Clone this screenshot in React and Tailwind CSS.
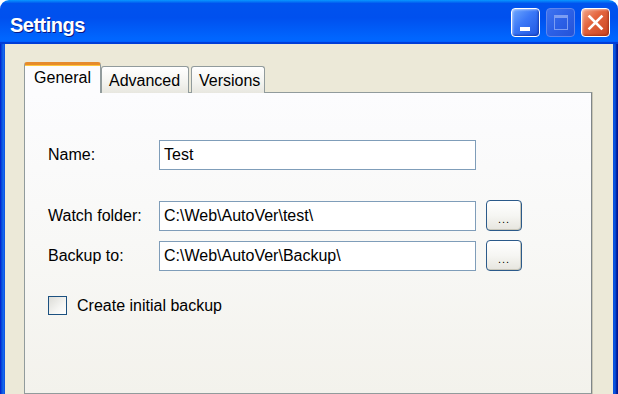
import React from "react";

function TitleButton({ kind }) {
  if (kind === "min") {
    return (
      <div className="w-[29px] h-[29px] rounded-[4px] border border-white bg-[linear-gradient(135deg,#6FA8FF_0%,#3B78F7_45%,#1F55E0_100%)] shadow-[inset_-1px_-1px_2px_rgba(0,30,140,0.6),inset_1px_1px_2px_rgba(255,255,255,0.5)] relative">
        <div className="absolute left-[8px] top-[18px] w-[10px] h-[4px] bg-white" />
      </div>
    );
  }
  if (kind === "max") {
    return (
      <div className="w-[29px] h-[29px] rounded-[4px] border border-[#5F86EC] bg-[linear-gradient(135deg,#3F74F0_0%,#2C60E6_50%,#2453D8_100%)] relative">
        <div className="absolute left-[7px] top-[6px] w-[14px] h-[15px] border border-[#7C9DF2] border-t-[3px]" />
      </div>
    );
  }
  return (
    <div className="w-[29px] h-[29px] rounded-[4px] border border-white bg-[linear-gradient(135deg,#F3A78C_0%,#E4653E_40%,#C94420_100%)] shadow-[inset_-1px_-1px_2px_rgba(120,20,0,0.5),inset_1px_1px_2px_rgba(255,255,255,0.5)] flex items-center justify-center">
      <svg width="17" height="17" viewBox="0 0 17 17">
        <path d="M2.5 2.5 L14.5 14.5 M14.5 2.5 L2.5 14.5" stroke="white" strokeWidth="2.6" strokeLinecap="square" />
      </svg>
    </div>
  );
}

function Row({ label, value, browse }) {
  return (
    <div className="flex items-center h-[31px]">
      <div className="w-[111px] shrink-0">{label}</div>
      <div className="w-[317px] h-[30px] border border-[#7F9DB9] bg-white flex items-center pl-[4px]">
        {value}
      </div>
      {browse && (
        <div className="ml-[10px] w-[36px] h-[31px] rounded-[4px] border border-[#2B5A8A] bg-[linear-gradient(to_bottom,#FFFFFF_0%,#F6F6F3_50%,#E6E5DE_100%)] shadow-[inset_-1px_-1px_0_#C9C7BA] flex items-center justify-center">
          <span className="text-[11px] leading-none mt-[7px] tracking-[1px]">...</span>
        </div>
      )}
    </div>
  );
}

export default function App() {
  return (
    <div
      className="w-[618px] h-[394px] overflow-hidden bg-white flex flex-col text-black text-[16px]"
      style={{ fontFamily: '"Liberation Sans", Arial, sans-serif' }}
    >
      {/* Title bar */}
      <div className="h-[44px] shrink-0 rounded-t-[9px] bg-[linear-gradient(180deg,#0997FF_0%,#0053EE_8%,#0050EE_40%,#0066FF_88%,#0066FF_93%,#005BFF_95%,#003DD7_96%,#003DD7_100%)] flex items-center pl-[10px] pr-[8px]">
        <div className="text-white font-bold text-[20px] tracking-[-0.5px] leading-none mt-[5px] [text-shadow:1px_1px_0_#0A1883]">
          Settings
        </div>
        <div className="ml-auto flex gap-[6px] mt-[1px]">
          <TitleButton kind="min" />
          <TitleButton kind="max" />
          <TitleButton kind="close" />
        </div>
      </div>

      {/* Body */}
      <div className="flex-1 flex min-h-0">
        <div className="w-[5px] shrink-0 bg-[linear-gradient(to_right,#0019CF,#0855DD_40%,#1666EE_70%,#0A4FE0)]" />
        <div className="flex-1 bg-[#ECE9D8] pl-[19px] pr-[21px] pt-[19px] flex flex-col min-h-0">
          {/* Tabs */}
          <div className="flex items-end h-[30px] relative z-10 -mb-[1px]">
            <div className="w-[77px] h-[31px] bg-[#FCFCFE] border-x border-[#919B9C] rounded-t-[3px] border-t-[3px] border-t-[#E68B2C] shadow-[inset_0_1px_0_#FFC73C] flex items-center justify-center pb-[2px]">
              General
            </div>
            <div className="w-[88px] h-[27px] bg-[linear-gradient(to_bottom,#FFFFFF,#F3F3EF_60%,#E8E7E0)] border border-b-0 border-[#919B9C] rounded-t-[3px] flex items-center pl-[7px] pt-[2px]">
              Advanced
            </div>
            <div className="ml-[2px] w-[74px] h-[27px] bg-[linear-gradient(to_bottom,#FFFFFF,#F3F3EF_60%,#E8E7E0)] border border-b-0 border-[#919B9C] rounded-t-[3px] flex items-center pl-[7px] pt-[2px]">
              Versions
            </div>
          </div>

          {/* Panel */}
          <div className="flex-1 border border-[#919B9C] border-r-[#7F8689] shadow-[1px_0_0_#C9C6B4] bg-[linear-gradient(to_bottom,#FCFCFE_0%,#F8F8F6_50%,#F3F2EC_100%)] pl-[23px] pt-[46px]">
            <Row label="Name:" value="Test" />
            <div className="mt-[30px]">
              <Row label="Watch folder:" value="C:\Web\AutoVer\test\" browse />
            </div>
            <div className="mt-[9px]">
              <Row label="Backup to:" value="C:\Web\AutoVer\Backup\" browse />
            </div>
            <div className="mt-[25px] flex items-center h-[19px]">
              <div className="w-[19px] h-[19px] border border-[#1C5180] bg-[linear-gradient(135deg,#DCDCD7,#F5F5F2_60%,#FFFFFF)]" />
              <div className="ml-[10px]">Create initial backup</div>
            </div>
          </div>
        </div>
        <div className="w-[5px] shrink-0 bg-[linear-gradient(to_right,#0A4FE0,#0855DD_40%,#001EA0_75%,#00138C)]" />
      </div>
    </div>
  );
}
